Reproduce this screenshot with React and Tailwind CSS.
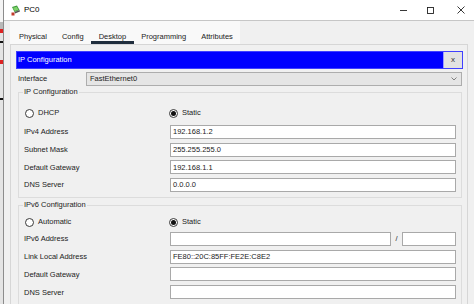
import React from 'react';

function Input({ value, className = 'flex-1' }) {
  return (
    <div className={`${className} h-[14px] bg-white border border-[#a9a9a9] pl-[2px] flex items-center leading-none text-[#222]`}>
      {value}
    </div>
  );
}

function Field({ label, value, children }) {
  return (
    <div className="flex items-center h-[14px]">
      <span className="w-[146px] shrink-0 text-[#222]">{label}</span>
      {children ?? <Input value={value} />}
    </div>
  );
}

function Radio({ label, checked, className = '' }) {
  return (
    <div className={`flex items-center ${className}`}>
      <span className="w-[9px] h-[9px] rounded-full border border-[#3a3a3a] bg-white flex items-center justify-center">
        {checked && <span className="w-[5px] h-[5px] rounded-full bg-[#111]" />}
      </span>
      <span className="ml-[4px] text-[#222]">{label}</span>
    </div>
  );
}

function Group({ title, className, children }) {
  return (
    <fieldset className={`ml-[2px] mr-[1px] border border-[#dcdcdc] pl-[5px] pr-[5px] ${className}`}>
      <legend className="-ml-[1px] px-[1px] leading-[10px] text-[#222]">{title}</legend>
      {children}
    </fieldset>
  );
}

function PcIcon() {
  return (
    <svg width="10" height="11" viewBox="0 0 10 11">
      <path d="M1 2 L6 0.5 L8.5 5 L3.5 7 Z" fill="#3d9a3a" />
      <path d="M2 2.8 L5.8 1.7 L7.4 4.7 L3.8 5.9 Z" fill="#7fd36b" />
      <path d="M3.5 7 L8.5 5 L9 6.5 L4 8.5 Z" fill="#555" />
      <rect x="0.5" y="7.5" width="3" height="3" fill="#c0392b" />
    </svg>
  );
}

export default function App() {
  const tabs = ['Physical', 'Config', 'Desktop', 'Programming', 'Attributes'];

  return (
    <div className="w-[474px] h-[304px] overflow-hidden flex bg-[#f0f0f0] font-['Liberation_Sans',Arial,sans-serif] text-[7.5px]">
      {/* edge of the window behind */}
      <div className="w-[3px] shrink-0 flex flex-col bg-[#e4e4e4]">
        <div className="h-[22px] bg-[#f4f4f4]" />
        <div className="h-[7px] bg-[#b8b8b8]" />
        <div className="h-[4px] bg-[#d22]" />
        <div className="h-[8px]" />
        <div className="h-[2px] bg-[#111]" />
        <div className="h-[17px]" />
        <div className="h-[4px] bg-[#d22]" />
        <div className="h-[34px]" />
        <div className="h-[2px] bg-[#111]" />
      </div>

      <div className="flex-1 flex flex-col border-l border-[#8c8c8c] min-w-0">
        {/* title bar */}
        <div className="h-[21px] shrink-0 bg-white flex items-center border-b border-[#c6c6c6]">
          <div className="ml-[7px]">
            <PcIcon />
          </div>
          <span className="ml-[3px] text-[8px] text-black">PC0</span>
          <div className="flex-1" />
          <svg width="7" height="7" viewBox="0 0 7 7" className="mr-[20px]">
            <line x1="0" y1="3.5" x2="7" y2="3.5" stroke="#222" strokeWidth="0.9" />
          </svg>
          <svg width="7" height="7" viewBox="0 0 7 7" className="mr-[23px]">
            <rect x="0.5" y="0.5" width="6" height="6" fill="none" stroke="#222" strokeWidth="0.9" />
          </svg>
          <svg width="8" height="8" viewBox="0 0 8 8" className="mr-[9px]">
            <path d="M0.5 0.5 L7.5 7.5 M7.5 0.5 L0.5 7.5" stroke="#222" strokeWidth="0.9" />
          </svg>
        </div>

        {/* body */}
        <div className="flex-1 flex flex-col pl-[6px] pr-[6px]">
          <div className="h-[23px] shrink-0 w-[230px] bg-[#f9f9f9] flex pl-[1.5px]">
            {tabs.map((t) => (
              <div
                key={t}
                className={`px-[7.5px] pt-[11px] leading-[9px] border-b-[3px] text-[#222] ${
                  t === 'Desktop' ? 'border-[#1f2d3d]' : 'border-transparent'
                }`}
              >
                {t}
              </div>
            ))}
          </div>

          <div className="flex-1 border border-[#d6d6d6] bg-[#f0f0f0] pl-[5px] pr-[4px] pt-[6px] flex flex-col">
            {/* blue header */}
            <div className="h-[18px] shrink-0 bg-[#0000ff] border border-[#4040ff] flex items-center">
              <span className="ml-[1px] text-white leading-none">IP Configuration</span>
              <div className="flex-1" />
              <div className="w-[19px] h-full bg-[#e2e2e2] border-l border-[#9a9aff] flex items-center justify-center text-[#333] text-[8px] leading-none">
                x
              </div>
            </div>

            {/* interface */}
            <div className="mt-[3px] ml-[2px] mr-[1px] flex items-center h-[14px]">
              <span className="w-[68px] shrink-0 text-[#222]">Interface</span>
              <div className="flex-1 h-full bg-[#e5e5e5] border border-[#adadad] flex items-center pl-[3px] text-[#222]">
                <span className="flex-1 leading-none">FastEthernet0</span>
                <svg width="6" height="4" viewBox="0 0 6 4" className="mr-[4px]">
                  <path d="M0.5 0.5 L3 3 L5.5 0.5" fill="none" stroke="#666" strokeWidth="0.8" />
                </svg>
              </div>
            </div>

            <Group title="IP Configuration" className="mt-[1px] pb-[5px]">
              <div className="mt-[10px] h-[12px] flex items-center pl-[1px]">
                <Radio label="DHCP" className="w-[144px]" />
                <Radio label="Static" checked />
              </div>
              <div className="mt-[6px] flex flex-col gap-[3.7px]">
                <Field label="IPv4 Address" value="192.168.1.2" />
                <Field label="Subnet Mask" value="255.255.255.0" />
                <Field label="Default Gateway" value="192.168.1.1" />
                <Field label="DNS Server" value="0.0.0.0" />
              </div>
            </Group>

            <Group title="IPv6 Configuration" className="mt-[2px] pb-[5px]">
              <div className="mt-[6px] h-[12px] flex items-center pl-[1px]">
                <Radio label="Automatic" className="w-[144px]" />
                <Radio label="Static" checked />
              </div>
              <div className="mt-[4px] flex flex-col gap-[3.7px]">
                <Field label="IPv6 Address">
                  <Input value="" />
                  <span className="w-[11px] text-center text-[#222]">/</span>
                  <Input value="" className="w-[54px]" />
                </Field>
                <Field label="Link Local Address" value="FE80::20C:85FF:FE2E:C8E2" />
                <Field label="Default Gateway" value="" />
                <Field label="DNS Server" value="" />
              </div>
            </Group>
          </div>
        </div>
      </div>
    </div>
  );
}
